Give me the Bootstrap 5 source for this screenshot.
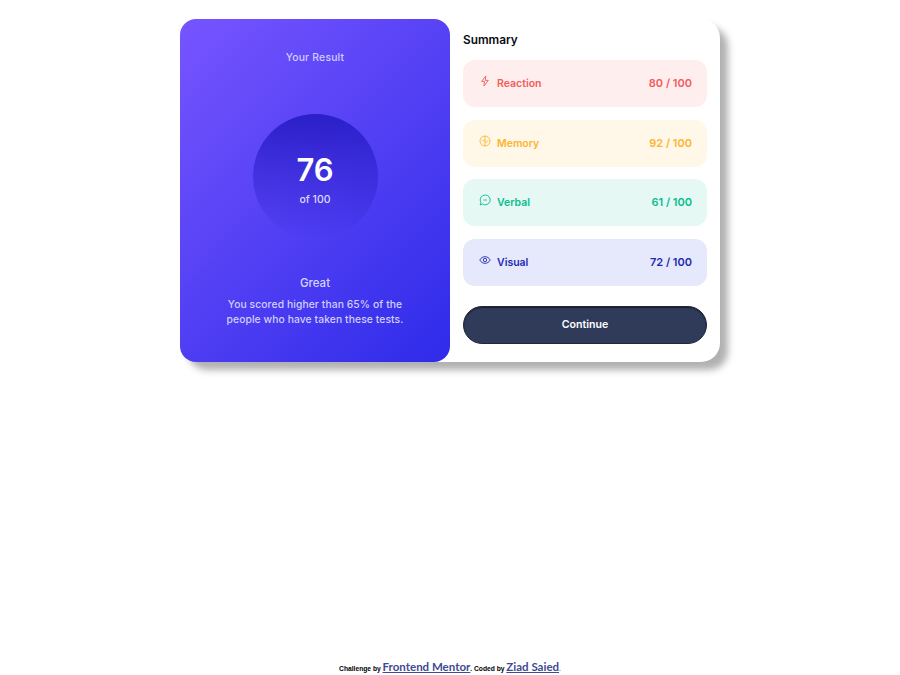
<!DOCTYPE html>
<html lang="en">
<head>
<meta charset="utf-8">
<title>Results summary</title>
<link href="https://cdn.jsdelivr.net/npm/bootstrap@5.3.0/dist/css/bootstrap.min.css" rel="stylesheet">
<style>
html,body{height:100%}
body{font-family:"Inter","Lato","Liberation Sans",sans-serif;background:#fff;overflow:hidden}
.page-wrap{height:675px;padding-top:19px}
.result-shell{width:540px;height:343px;flex:none;border-radius:19px;box-shadow:8px 8px 7px rgba(70,70,70,.42);background:#fff}
.score-panel{width:270px;border-radius:16px;background:linear-gradient(135deg,#7755ff 0%,#2e2be9 100%);padding-top:31px;color:#d0cfff}
.panel-title{font-size:10.400px;font-weight:500;line-height:15px;letter-spacing:.2px}
.score-ring{width:125px;height:125px;border-radius:50%;margin-top:49px;padding-top:4px;background:linear-gradient(180deg,#2a1fc9 0%,rgba(70,50,245,0) 100%);color:#fff}
.score-num{font-size:31px;font-weight:600;line-height:38px}
.score-of{font-size:10.500px;line-height:14px;margin-top:4px;color:#dcdbff;font-weight:500}
.score-word{font-size:11.500px;font-weight:500;line-height:16px;margin-top:36px;color:#d5d4ff}
.score-text{font-size:10.300px;font-weight:500;line-height:14.500px;margin-top:6px;letter-spacing:.1px}
.summary-panel{width:270px;padding:13px 13px 18px}
.summary-title{font-size:11.800px;font-weight:600;line-height:16px;color:#08090f;margin-bottom:12px}
.stat-row{height:47px;line-height:47px;flex:none;border-radius:12px;padding:0 15px 0 16px;font-size:10.500px;font-weight:600;margin-bottom:12.500px}
.stat-value{font-size:11px}
.stat-row svg{width:12px;height:12px;margin-right:6px;flex:none;fill:none;stroke:currentColor;stroke-width:.9}
.tone-red{background:#ffeeee;color:#f25c5c}
.tone-amber{background:#fff7e8;color:#fdb52e}
.tone-green{background:#e5f8f3;color:#08bd8f}
.tone-blue{background:#e6e8fb;color:#1f2ab0}
.continue-btn{height:38px;flex:none;border-radius:19px;background:#303b5a;color:#fff;font-size:10.600px;font-weight:600;border:1px solid #20283f;margin-top:7.500px;box-shadow:inset 0 1px 1px rgba(0,0,0,.5)}
.continue-btn:hover{background:#303b5a;color:#fff}
.foot-note{font-size:6.700px;line-height:14px;color:#111;font-family:"Liberation Sans",sans-serif;margin-top:auto;margin-bottom:-1px}
.foot-small{font-size:6.700px;font-weight:700;color:#000}
.foot-note a{color:#3e4a94;font-family:"Lato",sans-serif;font-size:11.500px;font-weight:700}
</style>
</head>
<body>
<div class="page-wrap d-flex flex-column align-items-center">
  <main class="result-shell d-flex">
    <section class="score-panel d-flex flex-column align-items-center text-center">
      <div class="panel-title">Your Result</div>
      <div class="score-ring d-flex flex-column align-items-center justify-content-center">
        <div class="score-num">76</div>
        <div class="score-of">of 100</div>
      </div>
      <div class="score-word">Great</div>
      <div class="score-text">You scored higher than 65% of the<br>people who have taken these tests.</div>
    </section>
    <section class="summary-panel d-flex flex-column">
      <div class="summary-title">Summary</div>
      <div class="stat-row tone-red d-flex align-items-baseline">
        <svg viewBox="0 0 12 12"><path d="M6.800 1 2.600 6.400h2.900L4.900 11l4.400-5.600H6.300z" stroke-linejoin="round"/></svg>
        <span>Reaction</span><span class="stat-value ms-auto">80 / 100</span>
      </div>
      <div class="stat-row tone-amber d-flex align-items-baseline">
        <svg viewBox="0 0 12 12"><circle cx="6" cy="6" r="5"/><path d="M6 1v10M6 5C5 6 3.500 6 3 5M6 7c1 0 2.500 0 3-1.500"/></svg>
        <span>Memory</span><span class="stat-value ms-auto">92 / 100</span>
      </div>
      <div class="stat-row tone-green d-flex align-items-baseline">
        <svg viewBox="0 0 12 12"><path d="M6.200 1a4.900 4.900 0 1 1-2.600 9L1.200 11l.7-2.500A4.900 4.900 0 0 1 6.200 1z" stroke-linejoin="round"/><path d="M4.400 6h3.400"/></svg>
        <span>Verbal</span><span class="stat-value ms-auto">61 / 100</span>
      </div>
      <div class="stat-row tone-blue d-flex align-items-baseline">
        <svg viewBox="0 0 12 12"><path d="M.8 6C2 3.800 3.800 2.700 6 2.700S10 3.800 11.200 6C10 8.200 8.200 9.300 6 9.300S2 8.200.8 6z"/><circle cx="6" cy="6" r="1.700"/></svg>
        <span>Visual</span><span class="stat-value ms-auto">72 / 100</span>
      </div>
      <button type="button" class="btn continue-btn w-100 p-0">Continue</button>
    </section>
  </main>
  <footer class="foot-note text-center"><span class="foot-small">Challenge by </span><a href="#">Frontend Mentor</a><span class="foot-small">. Coded by </span><a href="#">Ziad Saied</a>.</footer>
</div>
<script src="https://cdn.jsdelivr.net/npm/bootstrap@5.3.0/dist/js/bootstrap.bundle.min.js"></script>
</body>
</html>
